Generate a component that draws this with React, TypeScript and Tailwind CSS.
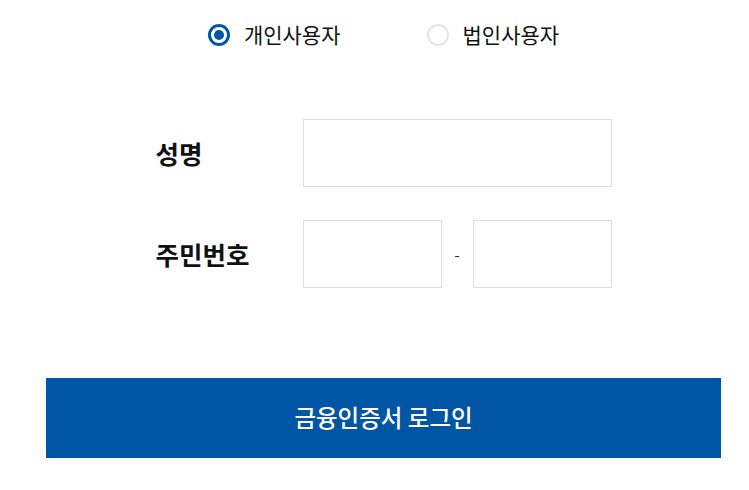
import { useState } from 'react'

function Radio({ checked, label, onClick }: { checked: boolean; label: string; onClick: () => void }) {
  return (
    <label className="flex items-center gap-[14px] cursor-pointer" onClick={onClick}>
      <span
        className={
          checked
            ? 'flex items-center justify-center w-[22px] h-[22px] rounded-full border-[3px] border-[#0055a5]'
            : 'flex items-center justify-center w-[22px] h-[22px] rounded-full border-2 border-[#e5e5e5]'
        }
      >
        {checked && <span className="w-[10px] h-[10px] rounded-full bg-[#0055a5]" />}
      </span>
      <span className="text-[21px] leading-[28px] mb-[3px] text-[#111]">{label}</span>
    </label>
  )
}

export default function App() {
  const [type, setType] = useState<'personal' | 'corp'>('personal')

  return (
    <div className="w-[749px] h-[490px] bg-white font-['Noto_Sans_CJK_KR','Noto_Sans',sans-serif]">
      <div className="ml-[46px] w-[675px] flex flex-col items-center">
        <div className="flex items-center gap-[86px] h-[70px]">
          <Radio checked={type === 'personal'} label="개인사용자" onClick={() => setType('personal')} />
          <Radio checked={type === 'corp'} label="법인사용자" onClick={() => setType('corp')} />
        </div>

        <div className="mt-[49px] flex flex-col gap-[33px]">
          <div className="flex items-center">
            <span className="w-[147px] text-[25.5px] font-bold text-[#111]">성명</span>
            <input type="text" className="w-[309px] h-[68px] border border-[#dedede] outline-none px-3" />
          </div>
          <div className="flex items-center">
            <span className="w-[147px] text-[25.5px] font-bold text-[#111]">주민번호</span>
            <input type="text" className="w-[139px] h-[68px] border border-[#dedede] outline-none px-3" />
            <span className="w-[31px] text-center text-[16px] text-[#333]">-</span>
            <input type="password" className="w-[139px] h-[68px] border border-[#dedede] outline-none px-3" />
          </div>
        </div>

        <button
          type="button"
          className="mt-[90px] w-[675px] h-[80px] bg-[#0055a5] text-white text-[23.5px] font-medium"
        >
          금융인증서 로그인
        </button>
      </div>
    </div>
  )
}
